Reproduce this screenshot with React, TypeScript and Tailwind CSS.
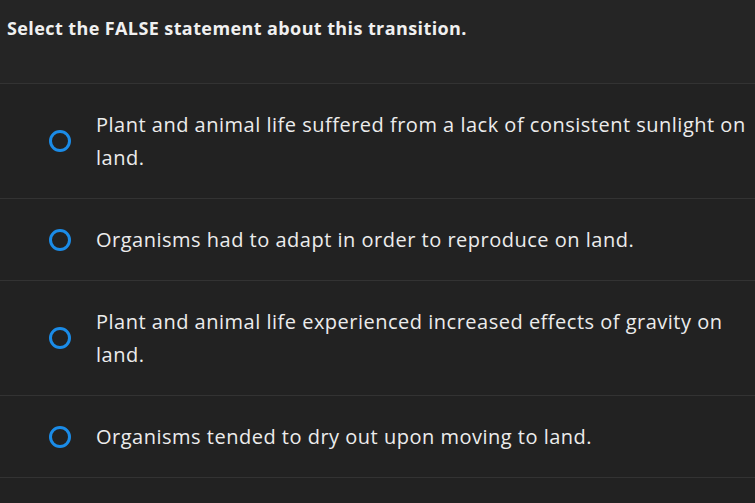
import React from "react";

const options = [
  "Plant and animal life suffered from a lack of consistent sunlight on land.",
  "Organisms had to adapt in order to reproduce on land.",
  "Plant and animal life experienced increased effects of gravity on land.",
  "Organisms tended to dry out upon moving to land.",
];

export default function App() {
  return (
    <div
      className="w-[755px] h-[503px] bg-[#222222] text-[#ececec] overflow-hidden"
      style={{ fontFamily: '"Open Sans", "Lato", sans-serif' }}
    >
      <div className="h-[84px] bg-[#252525] border-b border-[#333333] pl-[7px] pt-[16px]">
        <h1 className="text-[18px] font-bold leading-[24px] tracking-[0.4px] text-[#f0f0f0]">
          Select the FALSE statement about this transition.
        </h1>
      </div>
      {options.map((t, i) => (
        <div
          key={i}
          className="flex items-center border-b border-[#333333] pt-[24px] pb-[24px]"
        >
          <div className="w-[96px] shrink-0 flex pl-[49px]">
            <span className="block w-[22px] h-[22px] rounded-full border-[3px] border-[#1b8ce8]" />
          </div>
          <p className="text-[20px] leading-[33px] font-normal tracking-[0.5px] pr-[6px]">{t}</p>
        </div>
      ))}
    </div>
  );
}
